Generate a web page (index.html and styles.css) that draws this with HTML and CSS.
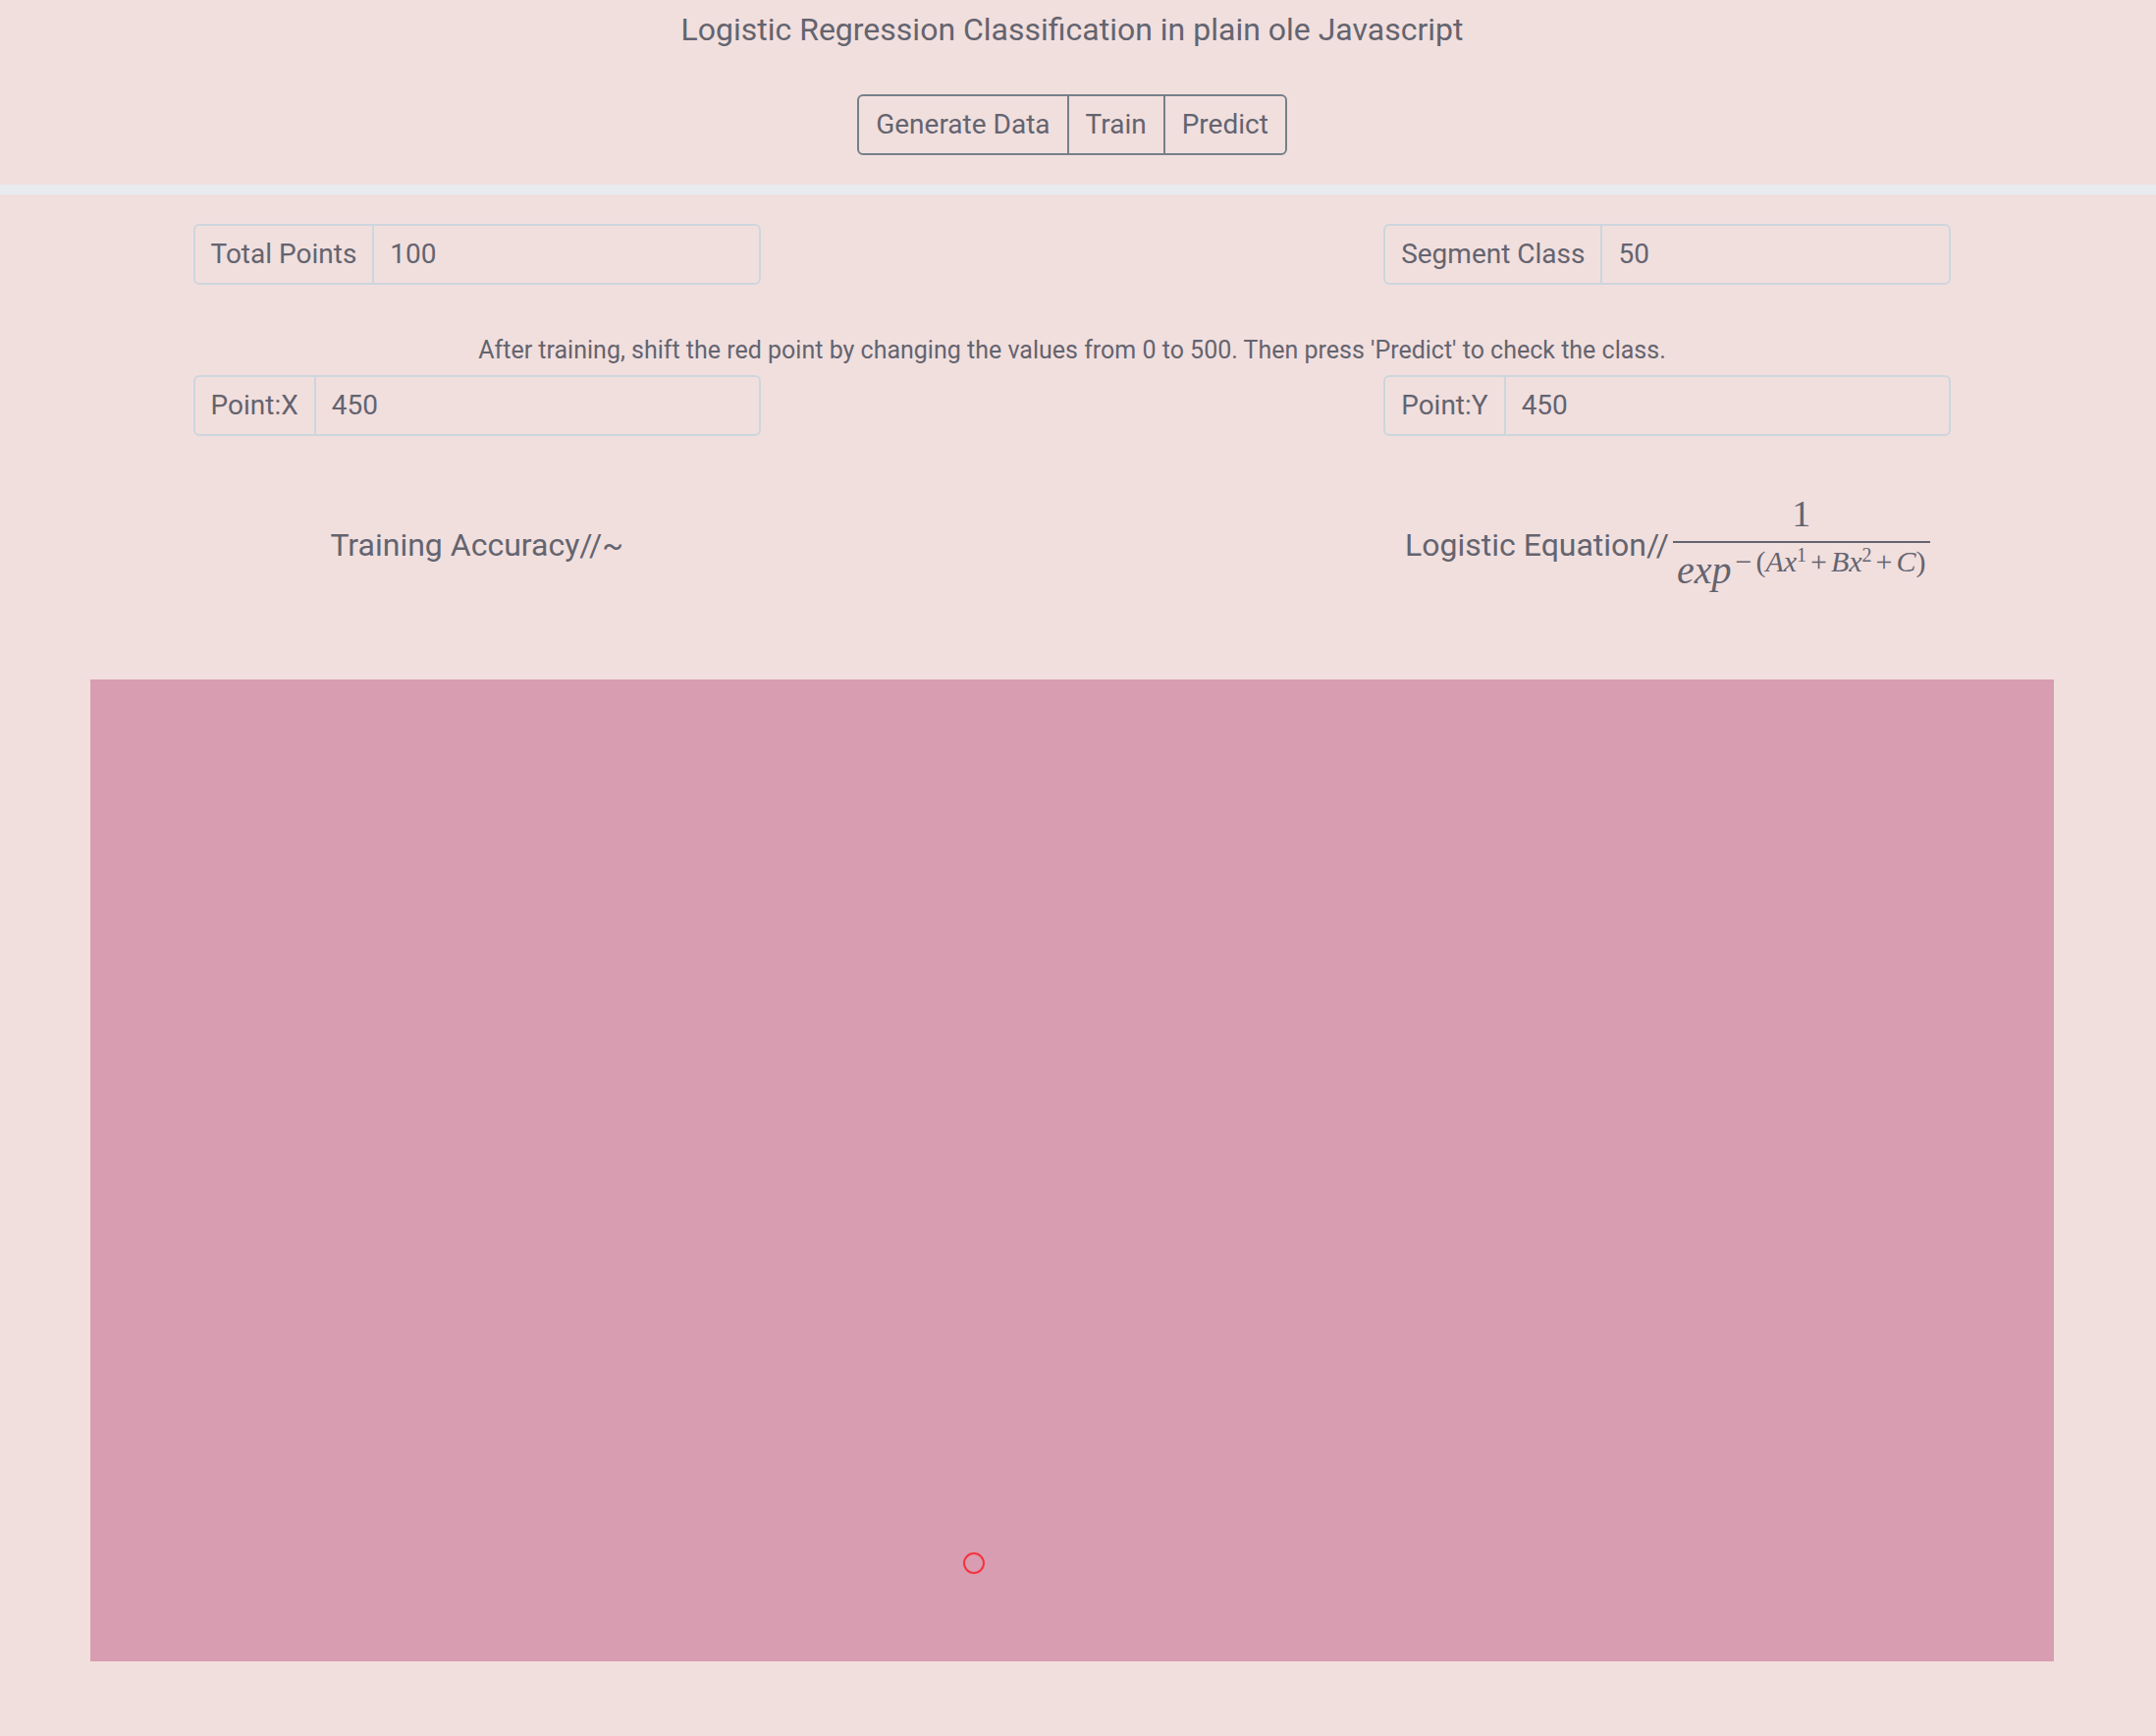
FILE: index.html
```html
<!DOCTYPE html>
<html lang="en">
<head>
  <meta charset="utf-8">
  <meta name="viewport" content="width=device-width, initial-scale=1">
  <title>Logistic Regression Classification</title>
  <link rel="stylesheet" href="styles.css">
</head>
<body>
  <header class="header">
    <h1 class="title">Logistic Regression Classification in plain ole Javascript</h1>
    <div class="button-group">
      <button class="button" type="button">Generate Data</button>
      <button class="button" type="button">Train</button>
      <button class="button" type="button">Predict</button>
    </div>
  </header>

  <main>
    <section class="row">
      <div class="field">
        <label class="field-label" for="total-points">Total Points</label>
        <input class="field-input" id="total-points" type="text" value="100">
      </div>
      <div class="field field-right">
        <label class="field-label" for="segment-class">Segment Class</label>
        <input class="field-input" id="segment-class" type="text" value="50">
      </div>
    </section>

    <p class="hint">After training, shift the red point by changing the values from 0 to 500. Then press 'Predict' to check the class.</p>

    <section class="row">
      <div class="field">
        <label class="field-label" for="point-x">Point:X</label>
        <input class="field-input" id="point-x" type="text" value="450">
      </div>
      <div class="field field-right">
        <label class="field-label" for="point-y">Point:Y</label>
        <input class="field-input" id="point-y" type="text" value="450">
      </div>
    </section>

    <section class="row results">
      <div class="result">Training Accuracy//~</div>
      <div class="result field-right">
        <span>Logistic Equation//</span>
        <span class="fraction">
          <span class="numerator">1</span>
          <span class="denominator"><i>exp</i><sup class="exponent"><span class="op">−</span>(<i>Ax</i><sup class="power">1</sup><span class="op">+</span><i>Bx</i><sup class="power">2</sup><span class="op">+</span><i>C</i>)</sup></span>
        </span>
      </div>
    </section>

    <svg class="plot" viewBox="0 0 2000 1000" role="img" aria-label="Data points">
      <circle class="point" cx="900" cy="900" r="10"/>
    </svg>
  </main>
</body>
</html>
```
FILE: styles.css
```css
* {
  box-sizing: border-box;
}

body {
  margin: 0;
  background: #f1dfde;
  color: #64646f;
  font-family: Roboto, "Liberation Sans", sans-serif;
  font-size: 28px;
}

.header {
  display: flex;
  flex-direction: column;
  align-items: center;
  gap: 42px;
  padding: 6px 12px 30px 0;
  border-bottom: 10px solid #e8ecef;
}

.title {
  margin: 0;
  font-size: 32px;
  font-weight: 400;
  line-height: 48px;
}

.button-group {
  display: flex;
}

.button {
  height: 62px;
  padding: 0 17px 2px;
  border: 2px solid #76808a;
  background: transparent;
  color: inherit;
  font: inherit;
}

.button + .button {
  margin-left: -2px;
}

.button:first-child {
  border-radius: 6px 0 0 6px;
}

.button:last-child {
  border-radius: 0 6px 6px 0;
}

main {
  padding: 30px 12px 76px 0;
}

.row {
  display: grid;
  grid-template-columns: repeat(3, minmax(0, 1fr));
  column-gap: 28px;
  padding: 0 9%;
}

.field {
  display: flex;
  height: 62px;
  border: 2px solid #cdd6dd;
  border-radius: 6px;
}

.field-right {
  grid-column: 3;
}

.field-label {
  padding: 0 16px;
  line-height: 58px;
  white-space: nowrap;
}

.field-input {
  flex: 1;
  min-width: 0;
  padding: 0 16px 2px;
  border: 0;
  border-left: 2px solid #cdd6dd;
  background: transparent;
  color: inherit;
  font: inherit;
}

.hint {
  margin: 48px 0 6px;
  font-size: 25px;
  line-height: 38px;
  text-align: center;
}

.results {
  align-items: center;
  margin: 51px 0 78px;
  font-size: 32px;
  line-height: 48px;
}

.result {
  display: flex;
  align-items: center;
  justify-content: center;
  gap: 4px;
  white-space: nowrap;
}

.fraction {
  display: flex;
  flex-direction: column;
  font-family: "Liberation Serif", serif;
  text-align: center;
}

.numerator {
  font-size: 38px;
  line-height: 56px;
}

.denominator {
  padding: 0 4px 5px;
  border-top: 2px solid #64646f;
  font-size: 40px;
  line-height: 56px;
}

.exponent {
  font-size: 30px;
  line-height: 0;
  vertical-align: 12px;
}

.power {
  font-size: 20px;
  line-height: 0;
  vertical-align: 10px;
}

.op {
  margin: 0 4px;
}

.plot {
  display: block;
  width: calc(100% - 184px);
  margin: 0 auto;
  background: #d89db0;
}

.point {
  fill: none;
  stroke: #f5333f;
  stroke-width: 2;
}
```
